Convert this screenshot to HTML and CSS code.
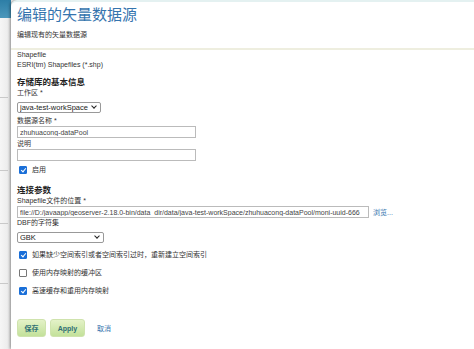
FILE: index.html
```html
<!DOCTYPE html>
<html lang="zh">
<head>
    <meta charset="UTF-8">
    <title>编辑的矢量数据源</title>
    <link rel="stylesheet" href="styles.css">
</head>
<body>
    <div class="sidebar">
        <div class="sidebar-top"></div>
        <div class="sep sep-1"></div>
        <div class="sep sep-2"></div>
        <div class="sep sep-3"></div>
        <div class="sep sep-4"></div>
    </div>
    <div class="page">
        <div class="page-head">
            <h1>编辑的矢量数据源</h1>
            <p class="subtitle">编辑现有的矢量数据源</p>
        </div>
        <form class="page-body">
            <div class="line">Shapefile</div>
            <div class="line">ESRI(tm) Shapefiles (*.shp)</div>

            <h2 class="section-title">存储库的基本信息</h2>
            <label class="line">工作区 *</label>
            <span class="select-wrap ws-select">
                <select class="field-select">
                    <option>java-test-workSpace</option>
                </select>
            </span>
            <label class="line label-gap">数据源名称 *</label>
            <input class="field-input name-input" type="text" value="zhuhuacong-dataPool">
            <label class="line label-tight">说明</label>
            <input class="field-input name-input" type="text">
            <label class="check-row enable-row"><input type="checkbox" checked> 启用</label>

            <h2 class="section-title conn-title">连接参数</h2>
            <label class="line">Shapefile文件的位置 *</label>
            <div class="file-row">
                <input class="field-input url-input" type="text" value="file://D:/javaapp/geoserver-2.18.0-bin/data_dir/data/java-test-workSpace/zhuhuacong-dataPool/moni-uuid-666">
                <a href="#" class="link">浏览...</a>
            </div>
            <label class="line">DBF的字符集</label>
            <span class="select-wrap charset-select">
                <select class="field-select">
                    <option>GBK</option>
                </select>
            </span>
            <label class="check-row first-check"><input type="checkbox" checked> 如果缺少空间索引或者空间索引过时，重新建立空间索引</label>
            <label class="check-row"><input type="checkbox"> 使用内存映射的缓冲区</label>
            <label class="check-row"><input type="checkbox" checked> 高速缓存和重用内存映射</label>

            <div class="buttons">
                <button type="button" class="btn btn-save">保存</button>
                <button type="button" class="btn btn-apply">Apply</button>
                <a href="#" class="link cancel">取消</a>
            </div>
        </form>
    </div>
</body>
</html>
```

FILE: styles.css
```css
body {
    margin: 0;
    height: 349px;
    display: flex;
    font-family: "Liberation Sans", "Noto Sans CJK SC", sans-serif;
    background-color: #f3f3f3;
    color: #333;
    overflow: hidden;
}

/* 左侧菜单条 */
.sidebar {
    width: 11px;
    flex-shrink: 0;
    display: flex;
    flex-direction: column;
    background: linear-gradient(to right, #f6f6f6, #e9e9e9);
}

.sidebar-top {
    height: 18px;
    background: linear-gradient(to bottom, #2d7ea6, #4b97bb);
}

.sep {
    width: 8px;
    height: 1px;
    background-color: #c9c9c9;
}

.sep-1 { margin-top: 79px; }
.sep-2 { margin-top: 72px; }
.sep-3 { margin-top: 52px; }
.sep-4 { margin-top: 59px; }

/* 主面板 */
.page {
    flex: 1;
    background-color: #fff;
    border-top: 2px solid #e4f1f1;
    border-top-left-radius: 6px;
    box-shadow: -1px 0 3px rgba(0, 0, 0, 0.4);
}

.page-head {
    padding: 4px 0 8px 6px;
    border-bottom: 2px solid #eeeedf;
}

h1 {
    margin: 0;
    font-size: 15px;
    line-height: 18px;
    font-weight: normal;
    color: #3574ae;
}

.subtitle {
    margin: 6px 0 0;
    font-size: 7px;
    line-height: 10px;
}

.page-body {
    padding-left: 6px;
    font-size: 7px;
}

.line {
    display: block;
    line-height: 10px;
}

.section-title {
    margin: 6px 0 0;
    font-size: 8.5px;
    line-height: 12px;
    font-weight: bold;
    color: #222;
}

.conn-title {
    margin-top: 9px;
}

.label-gap {
    margin-top: 3px;
}

.label-tight {
    margin-top: 1px;
}

/* 下拉框，箭头自己画 */
.select-wrap {
    display: block;
    position: relative;
    margin-top: 4px;
}

.select-wrap::after {
    content: "";
    position: absolute;
    right: 5px;
    top: 2px;
    width: 3px;
    height: 3px;
    border-right: 1.5px solid #222;
    border-bottom: 1.5px solid #222;
    transform: rotate(45deg);
    pointer-events: none;
}

.field-select {
    display: block;
    width: 100%;
    box-sizing: border-box;
    height: 11px;
    padding: 0 0 0 2px;
    font-family: "Liberation Sans", sans-serif;
    font-size: 7.5px;
    line-height: 9px;
    color: #222;
    border: 1px solid #999;
    border-radius: 2px;
    background-color: #fff;
    appearance: none;
}

.ws-select {
    width: 84px;
}

.charset-select {
    width: 87px;
}

.field-input {
    display: block;
    box-sizing: border-box;
    height: 12px;
    padding: 0 2px;
    font-family: "Liberation Sans", sans-serif;
    font-size: 7px;
    color: #444;
    border: 1px solid #bbb;
    background-color: #fff;
}

.name-input {
    width: 179px;
}

.check-row {
    display: flex;
    align-items: center;
    gap: 5px;
    line-height: 10px;
    margin-top: 8px;
    padding-left: 2px;
}

.check-row input {
    appearance: none;
    position: relative;
    box-sizing: border-box;
    width: 8px;
    height: 8px;
    margin: 0;
    border: 1px solid #777;
    border-radius: 1px;
    background-color: #fff;
}

.check-row input:checked {
    border-color: #1a6fd8;
    background-color: #1a6fd8;
}

.check-row input:checked::after {
    content: "";
    position: absolute;
    left: 1.5px;
    top: 0;
    width: 2px;
    height: 4px;
    border-right: 1.2px solid #fff;
    border-bottom: 1.2px solid #fff;
    transform: rotate(40deg);
}

.enable-row {
    margin-top: 4px;
}

.first-check {
    margin-top: 7px;
}

.file-row {
    display: flex;
    align-items: center;
    gap: 4px;
}

.url-input {
    width: 352px;
}

.link {
    color: #3574ae;
    text-decoration: none;
    font-size: 7px;
}

.buttons {
    display: flex;
    align-items: center;
    gap: 4px;
    margin-top: 23px;
}

.btn {
    height: 18px;
    padding: 0;
    font-family: "Liberation Sans", "Noto Sans CJK SC", sans-serif;
    font-size: 7px;
    font-weight: bold;
    color: #2f6f75;
    background: linear-gradient(to bottom, #e4f2c8, #c3e19a);
    border: 1px solid #cfe3ad;
    border-radius: 3px;
    cursor: pointer;
}

.btn-save {
    width: 29px;
}

.btn-apply {
    width: 35px;
}

.cancel {
    margin-left: 8px;
}
```
